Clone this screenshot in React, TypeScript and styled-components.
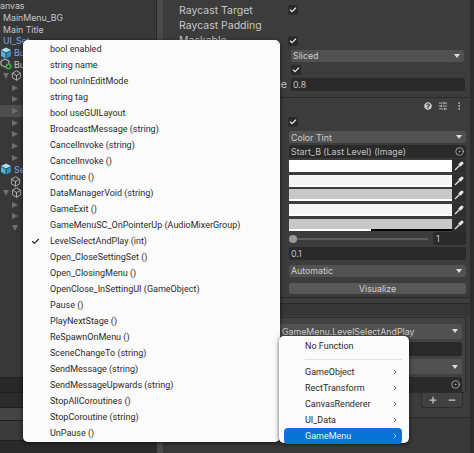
import React from "react";
import styled, { createGlobalStyle } from "styled-components";
import { Box, Check, ChevronRight, CircleDot, EllipsisVertical, Minus, Plus, SlidersHorizontal } from "lucide-react";
import { FaQuestionCircle } from "react-icons/fa";

const GlobalStyle = createGlobalStyle`
  html, body {
    margin: 0;
    padding: 0;
    background: #383838;
    overflow: hidden;
  }
`;

const Page = styled.div`
  position: relative;
  width: 474px;
  height: 453px;
  display: flex;
  overflow: hidden;
  font-family: Inter, "Noto Sans", sans-serif;
  font-size: 8.8px;
  color: #c6c6c6;
`;

const Hierarchy = styled.div`
  width: 156px;
  flex-shrink: 0;
  display: flex;
  flex-direction: column;
  background: #383838;
`;

const TreeList = styled.div`
  display: flex;
  flex-direction: column;
  flex: 1;
`;

const TreeRow = styled.div<{ $indent: number; $selected?: boolean; $blue?: boolean }>`
  height: 11.7px;
  display: flex;
  align-items: center;
  gap: 2px;
  padding-left: ${({ $indent }) => $indent}px;
  background: ${({ $selected }) => ($selected ? "#4d4d4d" : "transparent")};
  color: ${({ $blue }) => ($blue ? "#7da7e2" : "#c6c6c6")};
  white-space: nowrap;
`;

const Arrow = styled.span<{ $open?: boolean }>`
  width: 0;
  height: 0;
  flex-shrink: 0;
  ${({ $open }) =>
    $open
      ? `border-left: 3.5px solid transparent;
         border-right: 3.5px solid transparent;
         border-top: 6px solid #6e6e6e;`
      : `border-top: 3.5px solid transparent;
         border-bottom: 3.5px solid transparent;
         border-left: 6px solid #6e6e6e;`}
`;

const BottomBand = styled.div<{ $h: number; $bg: string }>`
  height: ${({ $h }) => $h}px;
  background: ${({ $bg }) => $bg};
  border-top: 1px solid #1f1f1f;
  box-sizing: border-box;
`;

const Splitter = styled.div`
  width: 7px;
  flex-shrink: 0;
  background: #4a4a4a;
  border-left: 1px solid #2a2a2a;
  box-sizing: border-box;
`;

const Inspector = styled.div`
  flex: 1;
  min-width: 0;
  display: flex;
  flex-direction: column;
  padding-top: 3px;
  background: #3c3c3c;
  border-right: 4px solid #2d2d2d;
`;

const Row = styled.div<{ $h: number }>`
  height: ${({ $h }) => $h}px;
  flex-shrink: 0;
  display: flex;
  align-items: center;
  padding-left: 16px;
  padding-right: 4px;
  white-space: nowrap;
`;

const HeaderRow = styled(Row)`
  border-top: 1px solid #2a2a2a;
  box-sizing: border-box;
`;

const FieldLabel = styled.span<{ $end?: boolean }>`
  width: 110px;
  flex-shrink: 0;
  font-size: 10.5px;
  text-align: ${({ $end }) => ($end ? "right" : "left")};
  padding-right: ${({ $end }) => ($end ? "2px" : "0")};
  box-sizing: border-box;
`;

const CheckBox = styled.span<{ $shift?: number }>`
  width: 10px;
  height: 10px;
  margin-left: ${({ $shift }) => $shift ?? -1}px;
  flex-shrink: 0;
  display: flex;
  align-items: center;
  justify-content: center;
  background: #2a2a2a;
  border-radius: 2px;
  color: #eeeeee;
`;

const Dropdown = styled.div<{ $h?: number; $inset?: boolean }>`
  flex: 1;
  height: ${({ $h }) => $h ?? 12}px;
  margin: 0 ${({ $inset }) => ($inset ? "2px" : "0")};
  display: flex;
  align-items: center;
  justify-content: space-between;
  padding: 0 4px 0 2px;
  background: #515151;
  border-radius: 2px;
  color: #cccccc;
`;

const Caret = styled.span`
  width: 0;
  height: 0;
  border-left: 3px solid transparent;
  border-right: 3px solid transparent;
  border-top: 4px solid #dddddd;
`;

const Field = styled.div<{ $h?: number; $inset?: boolean }>`
  flex: 1;
  height: ${({ $h }) => $h ?? 13}px;
  margin: 0 ${({ $inset }) => ($inset ? "1px 0 2px" : "0")};
  display: flex;
  align-items: center;
  justify-content: space-between;
  padding: 0 2px;
  background: #2a2a2a;
  border-radius: 2px;
  color: #c0c0c0;
  overflow: hidden;
`;

const Stack = styled.div`
  flex: 1;
  display: flex;
  align-items: center;
`;

const HeaderIcons = styled.div`
  flex: 1;
  display: flex;
  justify-content: flex-end;
  align-items: center;
  gap: 6px;
  padding-right: 2px;
  color: #c4c4c4;
`;

const Swatch = styled.div<{ $color: string }>`
  width: 163px;
  height: 12px;
  display: flex;
  align-items: flex-end;
  background: ${({ $color }) => $color};
`;

const Strip = styled.span<{ $color: string }>`
  flex: 1;
  height: 2px;
  background: ${({ $color }) => $color};
`;

const Dropper = styled.div`
  width: 14px;
  height: 14px;
  display: flex;
  align-items: center;
  justify-content: center;
  background: #2e2e2e;
`;

const SliderTrack = styled.div`
  position: relative;
  width: 136px;
  height: 2px;
  margin: 0 5px 0 3px;
  background: #5e5e5e;
`;

const SliderKnob = styled.span`
  position: absolute;
  left: -3px;
  top: -3px;
  width: 8px;
  height: 8px;
  border-radius: 50%;
  background: #9a9a9a;
`;

const SliderValue = styled.div`
  flex: 1;
  height: 13px;
  display: flex;
  align-items: center;
  padding-left: 3px;
  background: #2a2a2a;
  border-radius: 2px;
`;

const VisualizeButton = styled.div`
  flex: 1;
  height: 11px;
  display: flex;
  align-items: center;
  justify-content: center;
  background: #585858;
  border-radius: 2px;
  color: #d0d0d0;
`;

const Divider = styled.div<{ $h: number; $bg?: string }>`
  height: ${({ $h }) => $h}px;
  flex-shrink: 0;
  background: ${({ $bg }) => $bg ?? "#3c3c3c"};
  border-top: 1px solid #2a2a2a;
  box-sizing: border-box;
`;

const EventPanel = styled.div`
  height: 76px;
  flex-shrink: 0;
  margin: 1px 4px 0 2px;
  padding: 6px 3px 0 114px;
  display: flex;
  flex-direction: column;
  gap: 3px;
  box-sizing: border-box;
  background: #414141;
  border: 1px solid #2d2d2d;
  border-radius: 2px;
`;

const TabRow = styled.div`
  display: flex;
  justify-content: flex-end;
  padding-right: 7px;
  margin-bottom: 9px;
`;

const PlusMinusTab = styled.div`
  width: 40px;
  height: 14px;
  display: flex;
  align-items: center;
  justify-content: center;
  gap: 9px;
  background: #414141;
  border: 1px solid #2d2d2d;
  border-top: none;
  border-radius: 0 0 3px 3px;
  color: #c8c8c8;
`;

const Menu = styled.div`
  position: absolute;
  left: 23px;
  top: 40px;
  width: 257px;
  height: 402px;
  padding-top: 1px;
  box-sizing: border-box;
  background: #fbfbfb;
  border-radius: 5px;
  box-shadow: 0 1px 4px rgba(0, 0, 0, 0.65);
  font-family: Roboto, "Noto Sans", sans-serif;
  font-size: 9px;
  color: #2a2a2a;
`;

const MenuItem = styled.div`
  position: relative;
  height: 16px;
  display: flex;
  align-items: center;
  padding-left: 27px;
  white-space: nowrap;
`;

const Tick = styled.span`
  position: absolute;
  left: 8px;
  top: 4px;
  display: flex;
  color: #222222;
`;

const SubMenu = styled(Menu)`
  left: 279px;
  top: 336px;
  width: 130px;
  height: 107px;
  padding-top: 2px;
`;

const SubItem = styled.div<{ $active?: boolean }>`
  height: 16px;
  margin: 0 7px 0 5px;
  padding: 0 3px 0 21px;
  display: flex;
  align-items: center;
  justify-content: space-between;
  border-radius: 4px;
  background: ${({ $active }) => ($active ? "#0a74d6" : "transparent")};
  color: ${({ $active }) => ($active ? "#e8f2fc" : "#2a2a2a")};
`;

const SubSeparator = styled.div`
  height: 1px;
  margin: 5px 7px 4px 26px;
  background: #e2e2e2;
`;

const CubeIcon = styled(Box)`
  flex-shrink: 0;
  color: #b5b5b5;
`;

const PrefabIcon: React.FC = () => (
  <svg width="12" height="12" viewBox="0 0 12 12">
    <path d="M6 0.5 11 3 6 5.5 1 3Z" fill="#a6e0f5" />
    <path d="M1 3.8 5.5 6.2V11.5L1 9Z" fill="#4fb2de" />
    <path d="M11 3.8 6.5 6.2V11.5L11 9Z" fill="#2f8fc4" />
  </svg>
);

const VariantIcon: React.FC = () => (
  <svg width="12" height="12" viewBox="0 0 12 12">
    <path d="M5 1 9 3V7L5 9 1 7V3Z" fill="none" stroke="#c8c8c8" />
    <circle cx="8.5" cy="8.5" r="3" fill="#37b34a" />
    <circle cx="8.5" cy="8.5" r="1.2" fill="#1c1c1c" />
  </svg>
);

const EyedropperIcon: React.FC = () => (
  <svg width="10" height="10" viewBox="0 0 10 10">
    <path d="M1 9 5.5 4.5" stroke="#e4e4e4" strokeWidth="1.2" />
    <path d="M4.2 3.6 6.4 5.8 9 3.2A1.5 1.5 0 0 0 6.8 1Z" fill="#e4e4e4" />
  </svg>
);

const menuItems = [
  "bool enabled",
  "string name",
  "bool runInEditMode",
  "string tag",
  "bool useGUILayout",
  "BroadcastMessage (string)",
  "CancelInvoke (string)",
  "CancelInvoke ()",
  "Continue ()",
  "DataManagerVoid (string)",
  "GameExit ()",
  "GameMenuSC_OnPointerUp (AudioMixerGroup)",
  "LevelSelectAndPlay (int)",
  "Open_CloseSettingSet ()",
  "Open_ClosingMenu ()",
  "OpenClose_InSettingUI (GameObject)",
  "Pause ()",
  "PlayNextStage ()",
  "ReSpawnOnMenu ()",
  "SceneChangeTo (string)",
  "SendMessage (string)",
  "SendMessageUpwards (string)",
  "StopAllCoroutines ()",
  "StopCoroutine (string)",
  "UnPause ()",
];

const subItems = ["GameObject", "RectTransform", "CanvasRenderer", "UI_Data", "GameMenu"];

const swatches = [
  { color: "#ffffff", left: "#ffffff", right: "#ffffff" },
  { color: "#f5f5f5", left: "#ffffff", right: "#ffffff" },
  { color: "#c8c8c8", left: "#ffffff", right: "#ffffff" },
  { color: "#f5f5f5", left: "#ffffff", right: "#ffffff" },
  { color: "#c8c8c8", left: "#ffffff", right: "#000000" },
];

const App: React.FC = () => (
  <Page>
    <GlobalStyle />
    <Hierarchy>
      <TreeList>
        <TreeRow $indent={0}>anvas</TreeRow>
        <TreeRow $indent={3}>MainMenu_BG</TreeRow>
        <TreeRow $indent={3}>Main Title</TreeRow>
        <TreeRow $indent={3} $blue>UI_Set</TreeRow>
        <TreeRow $indent={0} $blue><PrefabIcon />Bu</TreeRow>
        <TreeRow $indent={0}><VariantIcon />Bu</TreeRow>
        <TreeRow $indent={3}><Arrow $open /><CubeIcon size={11} /></TreeRow>
        {[0, 1, 2, 3, 4, 5, 6].map((i) => (
          <TreeRow key={i} $indent={12} $selected={i === 2}><Arrow /></TreeRow>
        ))}
        <TreeRow $indent={0} $blue><PrefabIcon />Se</TreeRow>
        <TreeRow $indent={10}><CubeIcon size={11} /></TreeRow>
        <TreeRow $indent={3}><Arrow $open /><CubeIcon size={11} /></TreeRow>
        <TreeRow $indent={12}><Arrow /></TreeRow>
        <TreeRow $indent={12}><Arrow /></TreeRow>
        <TreeRow $indent={12}><Arrow $open /></TreeRow>
      </TreeList>
      <BottomBand $h={15} $bg="#282828" />
      <BottomBand $h={15} $bg="#2c2c2c" />
      <BottomBand $h={13} $bg="#444444" />
      <BottomBand $h={20} $bg="#3a3a3a" />
      <BottomBand $h={13} $bg="#2a2a2a" />
    </Hierarchy>
    <Splitter />
    <Inspector>
      <Row $h={14}><FieldLabel>Raycast Target</FieldLabel><CheckBox><Check size={8} strokeWidth={3.5} /></CheckBox></Row>
      <Row $h={16}><FieldLabel>Raycast Padding</FieldLabel></Row>
      <Row $h={15}><FieldLabel>Maskable</FieldLabel><CheckBox><Check size={8} strokeWidth={3.5} /></CheckBox></Row>
      <Row $h={15}><FieldLabel /><Dropdown $inset>Sliced<Caret /></Dropdown></Row>
      <Row $h={13}><FieldLabel /><CheckBox $shift={2}><Check size={8} strokeWidth={3.5} /></CheckBox></Row>
      <Row $h={17}><FieldLabel $end>le</FieldLabel><Field $inset>0.8</Field></Row>
      <Row $h={4} />
      <HeaderRow $h={16}><HeaderIcons><FaQuestionCircle size={8} /><SlidersHorizontal size={10} /><EllipsisVertical size={10} /></HeaderIcons></HeaderRow>
      <Row $h={17}><FieldLabel /><CheckBox><Check size={8} strokeWidth={3.5} /></CheckBox></Row>
      <Row $h={14}><FieldLabel /><Dropdown>Color Tint<Caret /></Dropdown></Row>
      <Row $h={15}><FieldLabel /><Field>Start_B (Last Level) (Image)<CircleDot size={9} /></Field></Row>
      {swatches.map((s, i) => (
        <Row key={i} $h={14.6}>
          <FieldLabel />
          <Stack>
            <Swatch $color={s.color}><Strip $color={s.left} /><Strip $color={s.right} /></Swatch>
            <Dropper><EyedropperIcon /></Dropper>
          </Stack>
        </Row>
      ))}
      <Row $h={14}>
        <FieldLabel />
        <SliderTrack><SliderKnob /></SliderTrack>
        <SliderValue>1</SliderValue>
      </Row>
      <Row $h={15}><FieldLabel /><Field>0.1</Field></Row>
      <Row $h={20}><FieldLabel /><Dropdown>Automatic<Caret /></Dropdown></Row>
      <Row $h={16}><FieldLabel /><VisualizeButton>Visualize</VisualizeButton></Row>
      <Divider $h={6} />
      <Divider $h={13} $bg="#363636" />
      <EventPanel>
        <Dropdown>GameMenu.LevelSelectAndPlay<Caret /></Dropdown>
        <Field />
        <Dropdown $h={11}><span /><Caret /></Dropdown>
        <Field><span /><CircleDot size={9} /></Field>
      </EventPanel>
      <TabRow>
        <PlusMinusTab><Plus size={10} strokeWidth={3} /><Minus size={10} strokeWidth={3} /></PlusMinusTab>
      </TabRow>
      <Divider $h={36} $bg="#383838" />
    </Inspector>
    <Menu>
      {menuItems.map((item) => (
        <MenuItem key={item}>
          {item === "LevelSelectAndPlay (int)" && <Tick><Check size={9} strokeWidth={3} /></Tick>}
          {item}
        </MenuItem>
      ))}
    </Menu>
    <SubMenu>
      <SubItem>No Function</SubItem>
      <SubSeparator />
      {subItems.map((item) => (
        <SubItem key={item} $active={item === "GameMenu"}>
          {item}
          <ChevronRight size={8} strokeWidth={2} />
        </SubItem>
      ))}
    </SubMenu>
  </Page>
);

export default App;
